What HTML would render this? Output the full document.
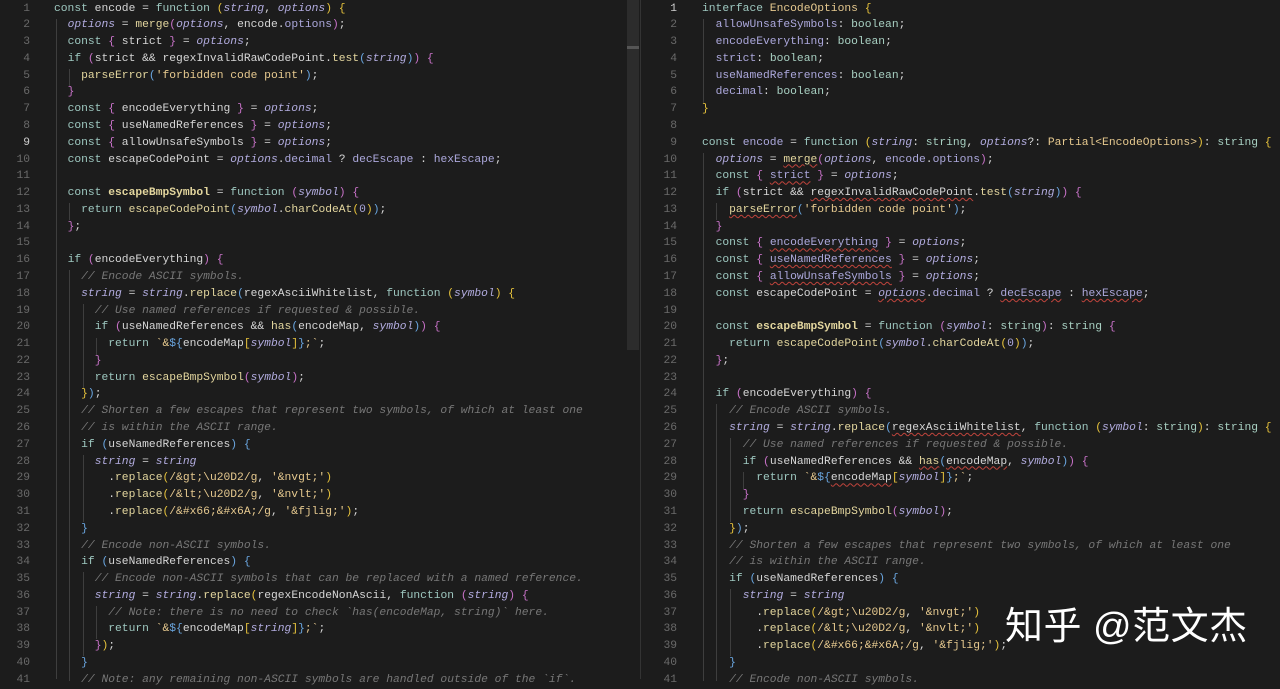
<!DOCTYPE html>
<html><head><meta charset="utf-8"><style>
*{margin:0;padding:0;box-sizing:border-box}
html,body{width:1280px;height:679px;overflow:hidden;background:#1c1c1c}
.pane{position:absolute;top:0.5px;font-family:"Liberation Mono",monospace;font-size:11.3px;line-height:16.78px;color:#d6d6d6;white-space:pre}
.ln{position:absolute;top:0.5px;font-family:"Liberation Mono",monospace;font-size:11.3px;line-height:16.78px;color:#6a6a6a;text-align:right;white-space:pre}
.ln b{color:#cfcfcf;font-weight:normal}
.k{color:#9ec8c0}
.f{color:#e3d69e}
.v{color:#b2acdf;font-style:italic}
.p{color:#aca8dc}
.s{color:#e6c98f}
.c{color:#777;font-style:italic}
.t{color:#a8d0c2}
.y{color:#e6c23c}
.m{color:#c872c8}
.bl{color:#6aa6e0}
.w{text-decoration:underline wavy #c0443c;text-decoration-thickness:1px;text-underline-offset:2px}
.g{position:absolute;width:1px;background:#3e3e3e}
</style></head><body>
<div style="position:absolute;left:627px;top:0;width:12px;height:350px;background:#2c2c2c"></div>
<div style="position:absolute;left:627px;top:46px;width:12px;height:3px;background:#555"></div>
<div style="position:absolute;left:640px;top:0;width:1px;height:679px;background:#333"></div>

<div class="g" style="left:56px;top:19px;height:660px"></div>
<div class="g" style="left:69px;top:69px;height:17px"></div>
<div class="g" style="left:69px;top:203px;height:17px"></div>
<div class="g" style="left:69px;top:270px;height:411px"></div>
<div class="g" style="left:83px;top:304px;height:84px"></div>
<div class="g" style="left:96px;top:338px;height:17px"></div>
<div class="g" style="left:83px;top:455px;height:67px"></div>
<div class="g" style="left:83px;top:572px;height:84px"></div>
<div class="g" style="left:96px;top:606px;height:33px"></div>

<div class="g" style="left:703px;top:19px;height:84px"></div>
<div class="g" style="left:703px;top:153px;height:528px"></div>
<div class="g" style="left:716px;top:203px;height:17px"></div>
<div class="g" style="left:716px;top:404px;height:277px"></div>
<div class="g" style="left:730px;top:438px;height:84px"></div>
<div class="g" style="left:743px;top:472px;height:17px"></div>
<div class="g" style="left:730px;top:589px;height:67px"></div>

<div class="ln" style="left:0;width:30px">1
2
3
4
5
6
7
8
<b>9</b>
10
11
12
13
14
15
16
17
18
19
20
21
22
23
24
25
26
27
28
29
30
31
32
33
34
35
36
37
38
39
40
41</div>
<div class="pane" style="left:54px"><span class="k">const</span> encode = <span class="k">function</span> <span class="y">(</span><span class="v">string</span>, <span class="v">options</span><span class="y">)</span> <span class="y">{</span>
  <span class="v">options</span> = <span class="f">merge</span><span class="m">(</span><span class="v">options</span>, encode.<span class="p">options</span><span class="m">)</span>;
  <span class="k">const</span> <span class="m">{</span> strict <span class="m">}</span> = <span class="v">options</span>;
  <span class="k">if</span> <span class="m">(</span>strict &amp;&amp; regexInvalidRawCodePoint.<span class="f">test</span><span class="bl">(</span><span class="v">string</span><span class="bl">)</span><span class="m">)</span> <span class="m">{</span>
    <span class="f">parseError</span><span class="bl">(</span><span class="s">'forbidden code point'</span><span class="bl">)</span>;
  <span class="m">}</span>
  <span class="k">const</span> <span class="m">{</span> encodeEverything <span class="m">}</span> = <span class="v">options</span>;
  <span class="k">const</span> <span class="m">{</span> useNamedReferences <span class="m">}</span> = <span class="v">options</span>;
  <span class="k">const</span> <span class="m">{</span> allowUnsafeSymbols <span class="m">}</span> = <span class="v">options</span>;
  <span class="k">const</span> escapeCodePoint = <span class="v">options</span>.<span class="p">decimal</span> ? <span class="p">decEscape</span> : <span class="p">hexEscape</span>;

  <span class="k">const</span> <span class="f" style="font-weight:bold">escapeBmpSymbol</span> = <span class="k">function</span> <span class="m">(</span><span class="v">symbol</span><span class="m">)</span> <span class="m">{</span>
    <span class="k">return</span> <span class="f">escapeCodePoint</span><span class="bl">(</span><span class="v">symbol</span>.<span class="f">charCodeAt</span><span class="y">(</span><span class="p">0</span><span class="y">)</span><span class="bl">)</span>;
  <span class="m">}</span>;

  <span class="k">if</span> <span class="m">(</span>encodeEverything<span class="m">)</span> <span class="m">{</span>
    <span class="c">// Encode ASCII symbols.</span>
    <span class="v">string</span> = <span class="v">string</span>.<span class="f">replace</span><span class="bl">(</span>regexAsciiWhitelist, <span class="k">function</span> <span class="y">(</span><span class="v">symbol</span><span class="y">)</span> <span class="y">{</span>
      <span class="c">// Use named references if requested &amp; possible.</span>
      <span class="k">if</span> <span class="m">(</span>useNamedReferences &amp;&amp; <span class="f">has</span><span class="bl">(</span>encodeMap, <span class="v">symbol</span><span class="bl">)</span><span class="m">)</span> <span class="m">{</span>
        <span class="k">return</span> <span class="s">`&amp;</span><span class="bl">${</span>encodeMap<span class="y">[</span><span class="v">symbol</span><span class="y">]</span><span class="bl">}</span><span class="s">;`</span>;
      <span class="m">}</span>
      <span class="k">return</span> <span class="f">escapeBmpSymbol</span><span class="m">(</span><span class="v">symbol</span><span class="m">)</span>;
    <span class="y">}</span><span class="bl">)</span>;
    <span class="c">// Shorten a few escapes that represent two symbols, of which at least one</span>
    <span class="c">// is within the ASCII range.</span>
    <span class="k">if</span> <span class="bl">(</span>useNamedReferences<span class="bl">)</span> <span class="bl">{</span>
      <span class="v">string</span> = <span class="v">string</span>
        .<span class="f">replace</span><span class="y">(</span><span class="s">/&amp;gt;\u20D2/g</span>, <span class="s">'&amp;nvgt;'</span><span class="y">)</span>
        .<span class="f">replace</span><span class="y">(</span><span class="s">/&amp;lt;\u20D2/g</span>, <span class="s">'&amp;nvlt;'</span><span class="y">)</span>
        .<span class="f">replace</span><span class="y">(</span><span class="s">/&amp;#x66;&amp;#x6A;/g</span>, <span class="s">'&amp;fjlig;'</span><span class="y">)</span>;
    <span class="bl">}</span>
    <span class="c">// Encode non-ASCII symbols.</span>
    <span class="k">if</span> <span class="bl">(</span>useNamedReferences<span class="bl">)</span> <span class="bl">{</span>
      <span class="c">// Encode non-ASCII symbols that can be replaced with a named reference.</span>
      <span class="v">string</span> = <span class="v">string</span>.<span class="f">replace</span><span class="y">(</span>regexEncodeNonAscii, <span class="k">function</span> <span class="m">(</span><span class="v">string</span><span class="m">)</span> <span class="m">{</span>
        <span class="c">// Note: there is no need to check `has(encodeMap, string)` here.</span>
        <span class="k">return</span> <span class="s">`&amp;</span><span class="bl">${</span>encodeMap<span class="y">[</span><span class="v">string</span><span class="y">]</span><span class="bl">}</span><span class="s">;`</span>;
      <span class="m">}</span><span class="y">)</span>;
    <span class="bl">}</span>
    <span class="c">// Note: any remaining non-ASCII symbols are handled outside of the `if`.</span></div>

<div class="ln" style="left:640px;width:37px"><b>1</b>
2
3
4
5
6
7
8
9
10
11
12
13
14
15
16
17
18
19
20
21
22
23
24
25
26
27
28
29
30
31
32
33
34
35
36
37
38
39
40
41</div>
<div class="pane" style="left:702px"><span class="k">interface</span> <span class="s">EncodeOptions</span> <span class="y">{</span>
  <span class="p">allowUnsafeSymbols</span>: <span class="t">boolean</span>;
  <span class="p">encodeEverything</span>: <span class="t">boolean</span>;
  <span class="p">strict</span>: <span class="t">boolean</span>;
  <span class="p">useNamedReferences</span>: <span class="t">boolean</span>;
  <span class="p">decimal</span>: <span class="t">boolean</span>;
<span class="y">}</span>

<span class="k">const</span> <span class="p">encode</span> = <span class="k">function</span> <span class="y">(</span><span class="v">string</span>: <span class="t">string</span>, <span class="v">options</span>?: <span class="s">Partial&lt;EncodeOptions&gt;</span><span class="y">)</span>: <span class="t">string</span> <span class="y">{</span>
  <span class="v">options</span> = <span class="f w">merge</span><span class="m">(</span><span class="v">options</span>, <span class="p">encode</span>.<span class="p">options</span><span class="m">)</span>;
  <span class="k">const</span> <span class="m">{</span> <span class="p w">strict</span> <span class="m">}</span> = <span class="v">options</span>;
  <span class="k">if</span> <span class="m">(</span>strict &amp;&amp; <span class="w">regexInvalidRawCodePoint</span>.<span class="f">test</span><span class="bl">(</span><span class="v">string</span><span class="bl">)</span><span class="m">)</span> <span class="m">{</span>
    <span class="f w">parseError</span><span class="bl">(</span><span class="s">'forbidden code point'</span><span class="bl">)</span>;
  <span class="m">}</span>
  <span class="k">const</span> <span class="m">{</span> <span class="p w">encodeEverything</span> <span class="m">}</span> = <span class="v">options</span>;
  <span class="k">const</span> <span class="m">{</span> <span class="p w">useNamedReferences</span> <span class="m">}</span> = <span class="v">options</span>;
  <span class="k">const</span> <span class="m">{</span> <span class="p w">allowUnsafeSymbols</span> <span class="m">}</span> = <span class="v">options</span>;
  <span class="k">const</span> escapeCodePoint = <span class="v w">options</span>.<span class="p">decimal</span> ? <span class="p w">decEscape</span> : <span class="p w">hexEscape</span>;

  <span class="k">const</span> <span class="f" style="font-weight:bold">escapeBmpSymbol</span> = <span class="k">function</span> <span class="m">(</span><span class="v">symbol</span>: <span class="t">string</span><span class="m">)</span>: <span class="t">string</span> <span class="m">{</span>
    <span class="k">return</span> <span class="f">escapeCodePoint</span><span class="bl">(</span><span class="v">symbol</span>.<span class="f">charCodeAt</span><span class="y">(</span><span class="p">0</span><span class="y">)</span><span class="bl">)</span>;
  <span class="m">}</span>;

  <span class="k">if</span> <span class="m">(</span>encodeEverything<span class="m">)</span> <span class="m">{</span>
    <span class="c">// Encode ASCII symbols.</span>
    <span class="v">string</span> = <span class="v">string</span>.<span class="f">replace</span><span class="bl">(</span><span class="w">regexAsciiWhitelist</span>, <span class="k">function</span> <span class="y">(</span><span class="v">symbol</span>: <span class="t">string</span><span class="y">)</span>: <span class="t">string</span> <span class="y">{</span>
      <span class="c">// Use named references if requested &amp; possible.</span>
      <span class="k">if</span> <span class="m">(</span>useNamedReferences &amp;&amp; <span class="f w">has</span><span class="bl">(</span><span class="w">encodeMap</span>, <span class="v">symbol</span><span class="bl">)</span><span class="m">)</span> <span class="m">{</span>
        <span class="k">return</span> <span class="s">`&amp;</span><span class="bl">${</span><span class="w">encodeMap</span><span class="y">[</span><span class="v">symbol</span><span class="y">]</span><span class="bl">}</span><span class="s">;`</span>;
      <span class="m">}</span>
      <span class="k">return</span> <span class="f">escapeBmpSymbol</span><span class="m">(</span><span class="v">symbol</span><span class="m">)</span>;
    <span class="y">}</span><span class="bl">)</span>;
    <span class="c">// Shorten a few escapes that represent two symbols, of which at least one</span>
    <span class="c">// is within the ASCII range.</span>
    <span class="k">if</span> <span class="bl">(</span>useNamedReferences<span class="bl">)</span> <span class="bl">{</span>
      <span class="v">string</span> = <span class="v">string</span>
        .<span class="f">replace</span><span class="y">(</span><span class="s">/&amp;gt;\u20D2/g</span>, <span class="s">'&amp;nvgt;'</span><span class="y">)</span>
        .<span class="f">replace</span><span class="y">(</span><span class="s">/&amp;lt;\u20D2/g</span>, <span class="s">'&amp;nvlt;'</span><span class="y">)</span>
        .<span class="f">replace</span><span class="y">(</span><span class="s">/&amp;#x66;&amp;#x6A;/g</span>, <span class="s">'&amp;fjlig;'</span><span class="y">)</span>;
    <span class="bl">}</span>
    <span class="c">// Encode non-ASCII symbols.</span></div>

<div style="position:absolute;left:1005px;top:604px;font-family:'Liberation Sans','Noto Sans CJK SC',sans-serif;font-size:38px;line-height:46px;color:#fff;white-space:nowrap;letter-spacing:0.5px">知乎 @范文杰</div>
</body></html>
